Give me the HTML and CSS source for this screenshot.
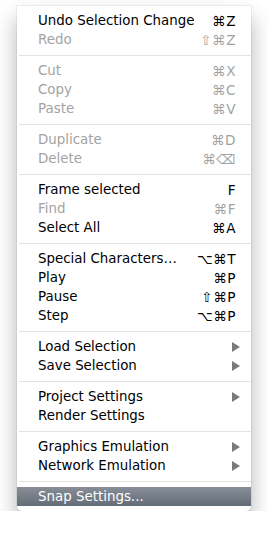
FILE: index.html
```html
<!DOCTYPE html>
<html lang="en">
<head>
    <meta charset="UTF-8">
    <meta name="viewport" content="width=device-width, initial-scale=1.0">
    <title>Edit Menu</title>
    <link rel="stylesheet" href="styles.css">
</head>
<body>
    <ul class="menu">
        <li class="item"><span class="label">Undo Selection Change</span><span class="key">⌘Z</span></li>
        <li class="item off"><span class="label">Redo</span><span class="key">⇧⌘Z</span></li>
        <li class="sep"></li>
        <li class="item off"><span class="label">Cut</span><span class="key">⌘X</span></li>
        <li class="item off"><span class="label">Copy</span><span class="key">⌘C</span></li>
        <li class="item off"><span class="label">Paste</span><span class="key">⌘V</span></li>
        <li class="sep"></li>
        <li class="item off"><span class="label">Duplicate</span><span class="key">⌘D</span></li>
        <li class="item off"><span class="label">Delete</span><span class="key">⌘⌫</span></li>
        <li class="sep"></li>
        <li class="item"><span class="label">Frame selected</span><span class="key">F</span></li>
        <li class="item off"><span class="label">Find</span><span class="key">⌘F</span></li>
        <li class="item"><span class="label">Select All</span><span class="key">⌘A</span></li>
        <li class="sep"></li>
        <li class="item"><span class="label">Special Characters…</span><span class="key">⌥⌘T</span></li>
        <li class="item"><span class="label">Play</span><span class="key">⌘P</span></li>
        <li class="item"><span class="label">Pause</span><span class="key">⇧⌘P</span></li>
        <li class="item"><span class="label">Step</span><span class="key">⌥⌘P</span></li>
        <li class="sep"></li>
        <li class="item sub"><span class="label">Load Selection</span><span class="arrow"></span></li>
        <li class="item sub"><span class="label">Save Selection</span><span class="arrow"></span></li>
        <li class="sep"></li>
        <li class="item sub"><span class="label">Project Settings</span><span class="arrow"></span></li>
        <li class="item"><span class="label">Render Settings</span></li>
        <li class="sep"></li>
        <li class="item sub"><span class="label">Graphics Emulation</span><span class="arrow"></span></li>
        <li class="item sub"><span class="label">Network Emulation</span><span class="arrow"></span></li>
        <li class="sep"></li>
        <li class="item active"><span class="label">Snap Settings...</span></li>
    </ul>
</body>
</html>
```

FILE: styles.css
```css
* { margin: 0; padding: 0; box-sizing: border-box; }
body { background: #fff; font-family: 'DejaVu Sans', sans-serif; font-size: 13.4px; color: #000; padding: 6px 17px 0 17px; }
.menu { list-style: none; width: 234px; background: #fff; padding: 5px 0; border-radius: 0 0 5px 5px; box-shadow: 0 0 0 1px rgba(0, 0, 0, 0.05), 0 12px 22px rgba(0, 0, 0, 0.3); }
.item { display: flex; align-items: center; justify-content: space-between; height: 19px; padding: 0 15px 0 21px; white-space: nowrap; }
.item.off { color: #a3a3a3; }
.item.sub { padding-right: 11px; }
.key { letter-spacing: 0.5px; font-size: 13.6px; }
.arrow { width: 0; height: 0; border-top: 5px solid transparent; border-bottom: 5px solid transparent; border-left: 8px solid #7a7a7a; }
.sep { height: 12px; display: flex; align-items: center; }
.sep::before { content: ''; flex: 1; height: 1px; margin-left: 2px; background: #e2e2e2; }
.item.active { color: #fff; background: linear-gradient(#878e97, #646c77); }
```
